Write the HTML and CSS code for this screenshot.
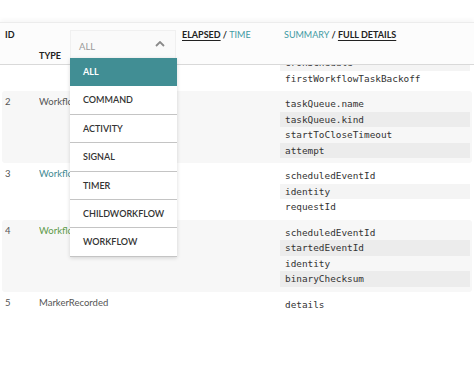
FILE: index.html
```html
<!DOCTYPE html>
<html lang="en">
<head>
    <meta charset="UTF-8">
    <meta name="viewport" content="width=device-width, initial-scale=1.0">
    <title>History</title>
    <link rel="stylesheet" href="styles.css">
</head>
<body>
    <div class="history-table">
        <!-- En-tête -->
        <div class="thead">
            <div class="th th-id">ID</div>
            <div class="th th-type">
                <span class="type-label">TYPE</span>
                <div class="type-filter">
                    <div class="filter-trigger">
                        <span class="filter-value">ALL</span>
                        <svg class="chevron" width="10" height="6" viewBox="0 0 10 6"><path d="M1 5 L5 1 L9 5" fill="none" stroke="#8a8a8a" stroke-width="1.8"/></svg>
                    </div>
                    <ul class="filter-menu">
                        <li class="filter-option selected">ALL</li>
                        <li class="filter-option">COMMAND</li>
                        <li class="filter-option">ACTIVITY</li>
                        <li class="filter-option">SIGNAL</li>
                        <li class="filter-option">TIMER</li>
                        <li class="filter-option">CHILDWORKFLOW</li>
                        <li class="filter-option">WORKFLOW</li>
                    </ul>
                </div>
            </div>
            <div class="th th-time"><span class="link-active">ELAPSED</span> / <span class="link-alt">TIME</span></div>
            <div class="th th-details"><span class="link-alt">SUMMARY</span> / <span class="link-active">FULL DETAILS</span></div>
        </div>

        <!-- Corps -->
        <div class="tbody">
            <div class="scroll-inner">
                <div class="tr">
                    <div class="td td-id">1</div>
                    <div class="td td-type">WorkflowExecutionStarted</div>
                    <div class="td"></div>
                    <div class="td td-details">
                        <div class="kv">workflowType.name</div>
                        <div class="kv">taskQueue.name</div>
                        <div class="kv">input</div>
                        <div class="kv">workflowExecutionTimeout</div>
                        <div class="kv">workflowRunTimeout</div>
                        <div class="kv">cronSchedule</div>
                        <div class="kv">firstWorkflowTaskBackoff</div>
                    </div>
                </div>
                <div class="tr odd">
                    <div class="td td-id">2</div>
                    <div class="td td-type">WorkflowTaskScheduled</div>
                    <div class="td"></div>
                    <div class="td td-details">
                        <div class="kv">taskQueue.name</div>
                        <div class="kv">taskQueue.kind</div>
                        <div class="kv">startToCloseTimeout</div>
                        <div class="kv">attempt</div>
                    </div>
                </div>
                <div class="tr">
                    <div class="td td-id">3</div>
                    <div class="td td-type type-started">WorkflowTaskStarted</div>
                    <div class="td"></div>
                    <div class="td td-details">
                        <div class="kv">scheduledEventId</div>
                        <div class="kv">identity</div>
                        <div class="kv">requestId</div>
                    </div>
                </div>
                <div class="tr odd">
                    <div class="td td-id">4</div>
                    <div class="td td-type type-completed">WorkflowTaskCompleted</div>
                    <div class="td"></div>
                    <div class="td td-details">
                        <div class="kv">scheduledEventId</div>
                        <div class="kv">startedEventId</div>
                        <div class="kv">identity</div>
                        <div class="kv">binaryChecksum</div>
                    </div>
                </div>
                <div class="tr">
                    <div class="td td-id">5</div>
                    <div class="td td-type">MarkerRecorded</div>
                    <div class="td"></div>
                    <div class="td td-details">
                        <div class="kv">details</div>
                    </div>
                </div>
            </div>
        </div>
    </div>
</body>
</html>
```

FILE: styles.css
```css
body {
    font-family: Lato, "Open Sans", Arial, sans-serif;
    background: #fff;
    margin: 0;
    padding: 0;
    color: #333;
}

.history-table {
    padding-top: 22px;
}

/* En-tête */

.thead {
    display: grid;
    grid-template-columns: 34px 143px 98px 1fr;
    height: 41px;
    padding-left: 5px;
    background: #fcfcfc;
    border-top: 1px solid #ececec;
    border-bottom: 1px solid #d9d9d9;
    box-shadow: 0 -3px 4px rgba(0,0,0,0.03);
    position: relative;
    z-index: 2;
    font-size: 9px;
    font-weight: 700;
    color: #222;
}

.th {
    padding-top: 6px;
}

.th-type {
    display: flex;
    align-items: flex-end;
    padding-top: 0;
}

.type-label {
    width: 31px;
    padding-bottom: 3px;
}

.th-details {
    padding-left: 4px;
}

.link-active {
    text-decoration: underline;
    text-underline-offset: 2px;
    color: #222;
}

.link-alt {
    color: #3f9aa3;
    font-weight: 400;
}

/* Filtre type */

.type-filter {
    position: relative;
    width: 106px;
    height: 34px;
}

.filter-trigger {
    display: flex;
    align-items: center;
    justify-content: space-between;
    height: 100%;
    box-sizing: border-box;
    padding: 0 10px 3px 8px;
    border: 1px solid #f0f0f0;
    border-bottom: none;
    background: #fafafa;
}

.filter-value {
    font-weight: 400;
    font-size: 9.5px;
    color: #9a9a9a;
}

.chevron {
    margin-bottom: 4px;
}

.filter-menu {
    position: absolute;
    top: 28px;
    left: 0;
    width: 107px;
    margin: 0;
    padding: 0;
    list-style: none;
    background: #fff;
    box-shadow: 0 1px 4px rgba(0,0,0,0.15);
}

.filter-option {
    height: 28.4px;
    line-height: 28px;
    box-sizing: border-box;
    padding-left: 13px;
    border-bottom: 1px solid #c4c4c4;
    font-size: 9px;
    font-weight: 600;
    color: #333;
}

.filter-option.selected {
    background: #418e94;
    color: #fff;
    font-weight: 700;
    border-bottom-color: #418e94;
}

/* Corps */

.tbody {
    height: 300px;
    overflow: hidden;
    padding: 0 2px;
}

.scroll-inner {
    margin-top: -92.5px;
}

.tr {
    display: grid;
    grid-template-columns: 34px 143px 98px 1fr;
    padding: 5px 2px 5px 3px;
    border-radius: 3px;
}

.tr.odd {
    background: #f7f7f7;
}

.td {
    font-size: 9.5px;
    color: #555;
}

.td-id,
.td-type {
    line-height: 11.5px;
    white-space: nowrap;
    overflow: hidden;
}

.type-started {
    color: #3f8a93;
}

.type-completed {
    color: #5e9a4a;
}

.td-details {
    font-family: "DejaVu Sans Mono", monospace;
    font-size: 9.4px;
    color: #333;
}

.kv {
    height: 15.5px;
    line-height: 15.5px;
    padding-left: 5px;
}

.kv:nth-child(even) {
    background: rgba(0,0,0,0.045);
}
```
